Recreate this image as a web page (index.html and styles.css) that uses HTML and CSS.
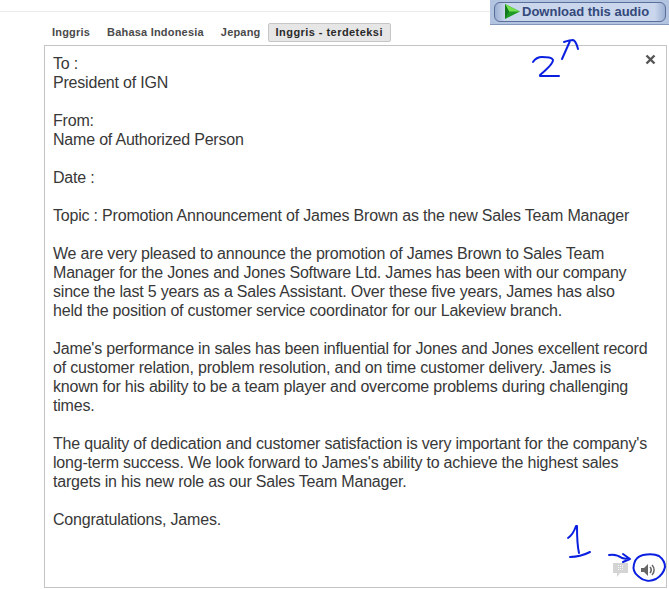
FILE: index.html
```html
<!DOCTYPE html>
<html lang="id">
<head>
<meta charset="utf-8">
<title>Terjemahan</title>
<link rel="stylesheet" href="styles.css">
</head>
<body>
<div class="page">
  <div class="top-rule"></div>
  <div class="tabs">
    <span class="tab">Inggris</span>
    <span class="tab">Bahasa Indonesia</span>
    <span class="tab">Jepang</span>
    <span class="tab tab-active">Inggris - terdeteksi</span>
  </div>
  <div class="panel">
    <div class="text">To :
President of IGN

From:
Name of Authorized Person

Date :

Topic : Promotion Announcement of James Brown as the new Sales Team Manager

We are very pleased to announce the promotion of James Brown to Sales Team
Manager for the Jones and Jones Software Ltd. James has been with our company
since the last 5 years as a Sales Assistant. Over these five years, James has also
held the position of customer service coordinator for our Lakeview branch.

Jame's performance in sales has been influential for Jones and Jones excellent record
of customer relation, problem resolution, and on time customer delivery. James is
known for his ability to be a team player and overcome problems during challenging
times.

The quality of dedication and customer satisfaction is very important for the company's
long-term success. We look forward to James's ability to achieve the highest sales
targets in his new role as our Sales Team Manager.

Congratulations, James.</div>
    <svg class="close" width="11" height="11" viewBox="0 0 11 11"><path d="M1.500 1.500l8 8M9.500 1.500l-8 8" stroke="#555" stroke-width="2.400" fill="none"/></svg>
    <svg class="chat" width="15" height="14" viewBox="0 0 15 14"><path d="M0 0h15v10H7l-3 4v-4H0z" fill="#d4d4d4"/><path d="M5 2h1v1H5zM7 2h1v1H7zM9 2h1v1H9zM5 4h1v1H5zM7 4h1v1H7zM9 4h1v1H9zM5 6h1v1H5zM7 6h1v1H7zM9 6h1v1H9z" fill="#f6f6f6"/></svg>
    <svg class="speaker" width="14" height="12" viewBox="0 0 14 12"><path d="M0 4h3l4-4v12L3 8H0z" fill="#666"/><path d="M9 3c1.600 1.600 1.600 4.400 0 6" stroke="#666" stroke-width="1.600" fill="none"/><path d="M11 1c2.800 2.800 2.800 7.200 0 10" stroke="#666" stroke-width="1.500" fill="none"/></svg>
  </div>
  <div class="download">
    <div class="download-btn">
      <svg class="play" width="15" height="15" viewBox="0 0 15 15"><path d="M0 0l15 7.500L0 15z" fill="#1f9a25"/><path d="M0 0l15 7.500H4z" fill="#74e050"/><path d="M0 0v15l4-7.500z" fill="#127a1d"/></svg>
      <span>Download this audio</span>
    </div>
  </div>
  <svg class="marks" width="669" height="589" viewBox="0 0 669 589">
    <g fill="none" stroke="#0a1fe0" stroke-width="2" stroke-linecap="round" stroke-linejoin="round">
      <path d="M533 62c2-3 5-5 9-5 5 0 10 0 11 3 0 4-7 10-13 15M540 76h19"/>
      <path d="M562 59l8-18M564 42c3-1 6-2 9-2 3 1 4 5 5 9"/>
      <path d="M568 538c3-2 6-6 8-12h1c0 9 0 19 2 27M570 557c7 0 14-2 20-5"/>
      <path d="M609 555c5-1 9 0 13 3 3 1 5 1 8 1M623 554l7 5-7 3"/>
      <path d="M643 555c6-1 12-1 16 1 4 3 6 7 6 11-1 5-4 9-9 12-6 3-13 2-18-3-4-3-5-8-4-12 1-5 5-8 9-9z"/>
    </g>
  </svg>
</div>
</body>
</html>
```

FILE: styles.css
```css
html, body {
  margin: 0;
  padding: 0;
  background: #fff;
}
.page {
  position: relative;
  width: 669px;
  height: 589px;
  overflow: hidden;
  font-family: "Liberation Sans", Arial, sans-serif;
}
.top-rule {
  height: 11px;
  width: 490px;
  border-bottom: 1px solid #ebebeb;
}
.tabs {
  display: flex;
  gap: 1px;
  height: 33px;
  margin-left: 44px;
  padding-top: 11px;
  box-sizing: border-box;
  align-items: flex-start;
}
.tab {
  font-size: 11px;
  font-weight: bold;
  line-height: 17px;
  letter-spacing: 0.2px;
  padding: 0 7px;
  color: #4a4a4a;
  border: 1px solid transparent;
  white-space: nowrap;
}
.tab-active {
  color: #2a2a2a;
  letter-spacing: 0.45px;
  background: #e6e6e6;
  border-color: #c6c6c6;
  border-radius: 2px;
  margin-left: -2px;
}
.panel {
  position: relative;
  margin-left: 44px;
  width: 623px;
  height: 543px;
  box-sizing: border-box;
  border: 1px solid #c4c4c4;
  padding: 8px 8px 0;
}
.text {
  font-size: 16px;
  line-height: 19px;
  letter-spacing: -0.2px;
  color: #383838;
  white-space: pre;
}
.close {
  position: absolute;
  top: 8px;
  right: 10px;
}
.chat {
  position: absolute;
  left: 568px;
  bottom: 10px;
}
.speaker {
  position: absolute;
  left: 596px;
  bottom: 11px;
}
.download {
  position: absolute;
  top: 0;
  right: 0;
  width: 179px;
  height: 25px;
  box-sizing: border-box;
  padding: 2px 3px 0 4px;
  background: #b3c4e0;
  border-bottom: 1px solid #8598bb;
}
.download-btn {
  display: flex;
  align-items: center;
  gap: 2px;
  height: 20px;
  box-sizing: border-box;
  padding: 0 0 2px 10px;
  border: 1px solid #5a6f99;
  border-radius: 6px;
  background: linear-gradient(90deg, #9cb0d2, #c9d6ec 6%, #c9d6ec 94%, #9cb0d2);
  font-size: 13px;
  font-weight: bold;
  color: #34487a;
  white-space: nowrap;
}
.marks {
  position: absolute;
  top: 0;
  left: 0;
  pointer-events: none;
}
```
